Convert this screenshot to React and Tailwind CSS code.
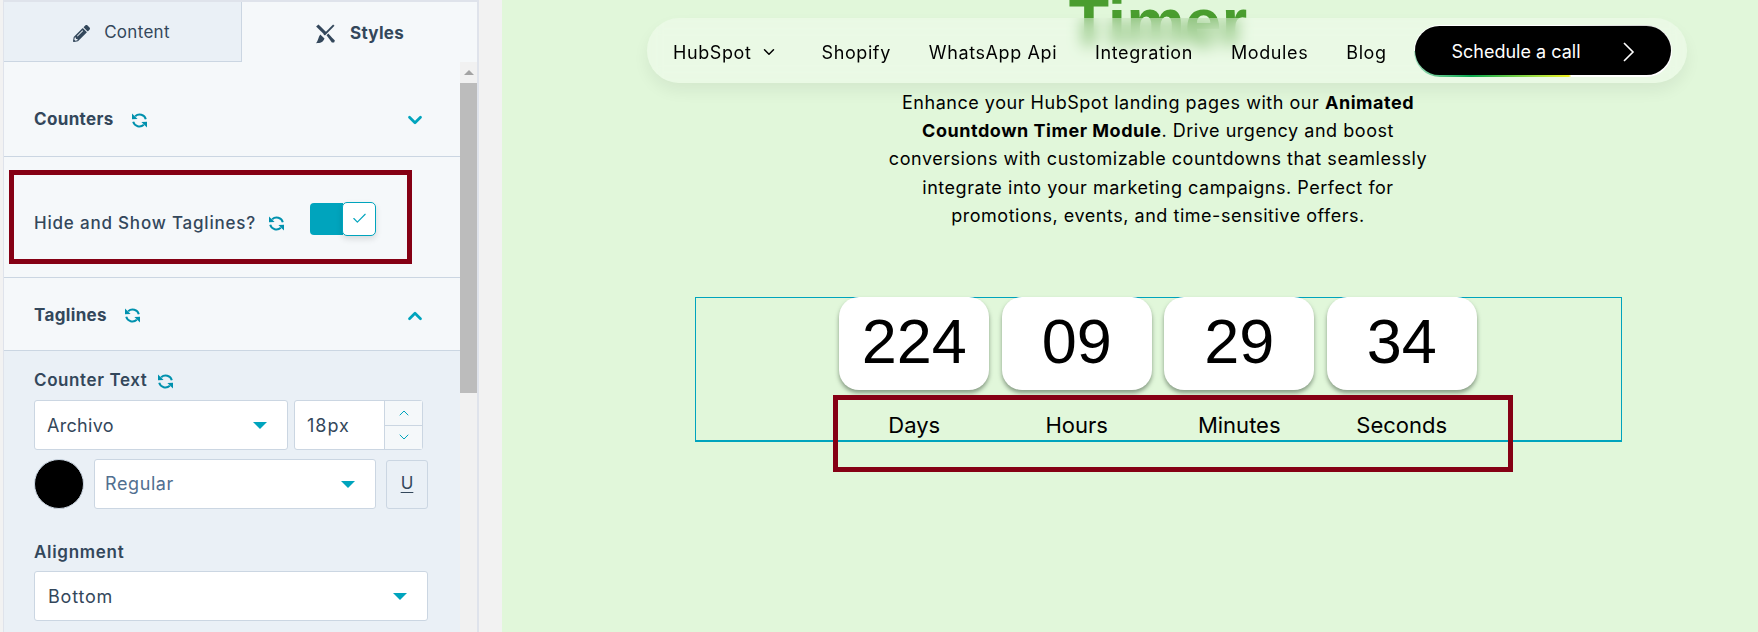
import React from "react";
import { FaPencilAlt } from "react-icons/fa";
import { ChevronDown, ChevronUp, Check } from "lucide-react";

const panelFont = { fontFamily: "Inter, 'Noto Sans', sans-serif" };

function Sync({ className = "" }) {
  return (
    <svg width="17" height="17" viewBox="0 0 17 17" className={"shrink-0 text-[#0091ae] " + className} fill="none">
      <path d="M14.8 7.2 A6.5 6.5 0 0 0 4.2 4.2" stroke="currentColor" strokeWidth="2" />
      <path d="M2.2 9.8 A6.5 6.5 0 0 0 12.8 12.8" stroke="currentColor" strokeWidth="2" />
      <path d="M1 1.6 L6.6 7 L1 7.2 Z" fill="currentColor" />
      <path d="M16 15.4 L10.4 10 L16 9.8 Z" fill="currentColor" />
    </svg>
  );
}

function StylesIcon() {
  return (
    <svg width="21" height="20" viewBox="0 0 20 20" fill="#33475b" className="shrink-0">
      <path d="M0.6 2.4 L3 0.4 L11.4 8.8 L9.2 11 Z" />
      <path d="M11 11.2 L12.8 9.6 L16.4 13.4 L19.4 16.6 L18.6 18.4 L16.4 18.4 L13.8 15 Z" />
      <path d="M17.6 0.6 L19 1.8 L9.4 11.6 L8 10.2 Z" />
      <path d="M4.8 10.6 L9 14.6 C7.6 18.4 5 19.2 0.6 19.2 C2.6 17.4 2.8 13 4.8 10.6 Z" />
    </svg>
  );
}

function Caret() {
  return <span className="w-0 h-0 border-x-[7px] border-x-transparent border-t-[7px] border-t-[#00a4bd]" />;
}

function AccordionRow({ title, open, height, pad }) {
  return (
    <div className={"flex items-center justify-between pl-[30px] pr-[34px] border-b border-[#cbd6e2] shrink-0 " + height + " " + pad}>
      <div className="flex items-center gap-[17px]">
        <span className="text-[17px] font-bold text-[#33475b] tracking-[0.35px]">{title}</span>
        <Sync />
      </div>
      {open ? <ChevronUp size={22} strokeWidth={3} className="text-[#00a4bd]" /> : <ChevronDown size={22} strokeWidth={3} className="text-[#00a4bd]" />}
    </div>
  );
}

function Sidebar() {
  return (
    <aside className="relative w-[502px] h-full shrink-0 bg-[#f2f2f2] pl-[3px] overflow-hidden" style={panelFont}>
      <div className="w-[476px] h-full bg-[#f5f8fa] border-t-2 border-r-[2px] border-l border-[#dfe3eb] flex flex-col">
        <div className="flex h-[60px] shrink-0">
          <div className="w-[238px] bg-[#eaf0f6] border-r border-b border-[#cbd6e2] flex items-center justify-center gap-[14px] text-[#33475b] text-[17px] tracking-[0.3px] pt-[3px] pr-[2px]">
            <FaPencilAlt size={17} />
            <span>Content</span>
          </div>
          <div className="flex-1 flex items-center justify-center gap-[14px] text-[#33475b] text-[17px] font-bold tracking-[0.3px] pt-[3px]">
            <StylesIcon />
            <span>Styles</span>
          </div>
        </div>
        <div className="flex flex-1 min-h-0">
          <div className="flex-1 min-w-0 flex flex-col">
            <AccordionRow title="Counters" height="h-[95px]" pad="pt-[22px]" />
            <div className="h-[121px] flex items-center pl-[30px] pt-[13px] border-b border-[#cbd6e2] shrink-0">
              <span className="w-[226px] text-[17px] font-medium text-[#33475b] whitespace-nowrap tracking-[0.8px]">Hide and Show Taglines?</span>
              <Sync className="ml-[8px]" />
              <div className="ml-[25px] flex items-center h-[33px] w-[66px] -mt-[10px]">
                <div className="w-[34px] h-[32px] bg-[#00a4bd] rounded-l-[4px]" />
                <div className="w-[34px] h-[34px] -ml-[1px] bg-white border border-[#00a4bd] rounded-[5px] flex items-center justify-center shadow-[0_3px_6px_rgba(0,0,0,0.12)]">
                  <Check size={17} strokeWidth={1.6} className="text-[#00a4bd]" />
                </div>
              </div>
            </div>
            <AccordionRow title="Taglines" open height="h-[73px]" pad="pt-[3px]" />
            <div className="flex-1 bg-[#eaf0f6] pl-[30px] pr-[4px] pt-[19px]">
              <div className="flex items-center gap-[10px] h-[22px]">
                <span className="text-[17px] font-semibold text-[#33475b] tracking-[0.6px]">Counter Text</span>
                <Sync />
              </div>
              <div className="flex gap-[6px] mt-[8px] h-[50px]">
                <div className="w-[254px] bg-white border border-[#cbd6e2] rounded-[3px] flex items-center justify-between pl-[12px] pr-[20px] text-[#33475b] text-[18px] tracking-[0.3px]">
                  <span>Archivo</span><Caret />
                </div>
                <div className="w-[129px] bg-white border border-[#cbd6e2] rounded-[3px] flex text-[#33475b] text-[18px] tracking-[1px]">
                  <div className="flex-1 flex items-center pl-[12px]">18px</div>
                  <div className="w-[38px] border-l border-[#cbd6e2] bg-[#f5f8fa] flex flex-col">
                    <div className="flex-1 flex items-center justify-center border-b border-[#cbd6e2]"><ChevronUp size={16} strokeWidth={1.5} className="text-[#00a4bd]" /></div>
                    <div className="flex-1 flex items-center justify-center"><ChevronDown size={16} strokeWidth={1.5} className="text-[#00a4bd]" /></div>
                  </div>
                </div>
              </div>
              <div className="flex items-center mt-[9px] h-[50px]">
                <div className="w-[50px] h-[50px] rounded-full bg-black border border-[#cbd6e2]" />
                <div className="ml-[10px] w-[282px] h-[50px] bg-white border border-[#cbd6e2] rounded-[3px] flex items-center justify-between pl-[10px] pr-[20px] text-[#516f90] text-[18px] tracking-[0.6px]">
                  <span className="-mt-[1px]">Regular</span><Caret />
                </div>
                <div className="ml-[10px] w-[42px] h-[49px] border border-[#cbd6e2] rounded-[3px] flex items-center justify-center text-[#33475b] text-[17px] underline underline-offset-[3px]">U</div>
              </div>
              <div className="mt-[33px] h-[22px] flex items-center text-[17px] font-semibold text-[#33475b] tracking-[0.7px]">Alignment</div>
              <div className="mt-[7px] w-[394px] h-[50px] bg-white border border-[#cbd6e2] rounded-[3px] flex items-center justify-between pl-[13px] pr-[20px] text-[#33475b] text-[18px] tracking-[0.8px]">
                <span>Bottom</span><Caret />
              </div>
            </div>
          </div>
          <div className="w-[17px] shrink-0 bg-[#f1f1f1] flex flex-col">
            <div className="h-[21px] flex items-center justify-center">
              <span className="w-0 h-0 border-x-[5px] border-x-transparent border-b-[5px] border-b-[#a3a3a3]" />
            </div>
            <div className="h-[310px] bg-[#bcbcbc]" />
          </div>
        </div>
      </div>
      <div className="absolute left-[9px] top-[170px] w-[403px] h-[94px] border-[5px] border-[#850014]" />
    </aside>
  );
}

const nav = ["Shopify", "WhatsApp Api", "Integration", "Modules", "Blog"];
const counters = [["224", "Days"], ["09", "Hours"], ["29", "Minutes"], ["34", "Seconds"]];

function Main() {
  return (
    <main className="relative flex-1 h-full bg-[#e1f7da] overflow-hidden text-black" style={{ fontFamily: "Inter, 'Liberation Sans', sans-serif" }}>
      <div className="pl-[56px] flex flex-col items-center">
        <h1 className="text-[66px] leading-[72px] font-bold text-[#4a9d2f] -mt-[14px] h-[103px]" style={{ fontFamily: "'Liberation Sans', sans-serif" }}>Timer</h1>
        <p className="text-[18px] leading-[28.2px] text-center w-[600px] tracking-[0.53px]">
          Enhance your HubSpot landing pages with our <b>Animated<br />Countdown Timer Module</b>. Drive urgency and boost<br />conversions with customizable countdowns that seamlessly<br />integrate into your marketing campaigns. Perfect for<br />promotions, events, and time-sensitive offers.
        </p>
        <div className="mt-[67px] w-[927px] h-[145px] border border-b-2 border-[#00a4bd] flex justify-center gap-[12.5px]">
          {counters.map(([n, l]) => (
            <div key={l} className="w-[150px] flex flex-col items-center -mt-[1px]">
              <div className="w-[150px] h-[93px] bg-white rounded-[20px] shadow-[0_3px_4px_rgba(60,80,60,0.55)] flex items-center justify-center text-[63px] leading-none pb-[4px]" style={{ fontFamily: "'Liberation Sans', sans-serif" }}>{n}</div>
              <div className="mt-[21px] text-[22px] leading-[28px]">{l}</div>
            </div>
          ))}
        </div>
      </div>
      <nav className="absolute left-[145px] top-[18px] w-[1040px] h-[65px] rounded-[33px] bg-white/30 backdrop-blur-[8px] shadow-[0_8px_16px_rgba(0,0,0,0.06)] flex items-center pl-[26px] pr-[15px] text-[18px] tracking-[0.6px]">
        <span className="flex items-center gap-[8px] mr-[44px] pt-[3px]">HubSpot <ChevronDown size={18} strokeWidth={2} /></span>
        <div className="flex items-center gap-[38px] pt-[3px]">
          {nav.map((n) => <span key={n}>{n}</span>)}
        </div>
        <div className="relative ml-auto w-[258px] h-[52px] rounded-[26px] overflow-hidden bg-[linear-gradient(100deg,#ffffff_55%,#d4d4d4_85%,#ffffff)] tracking-normal">
          <div className="absolute left-0 right-0 bottom-0 h-[26px] bg-[linear-gradient(90deg,#9fdcb8,#0aa84f_22%,#a5e040_48%,#f0f020_60%,#ffffff_61%)]" />
          <div className="absolute left-[1px] right-[1px] top-[1px] bottom-[2px] bg-black text-white rounded-[25px] flex items-center justify-center gap-[41px] text-[18px] pt-[3px]">
            <span>Schedule a call</span>
            <svg width="13" height="22" viewBox="0 0 13 22" fill="none" stroke="currentColor" strokeWidth="1.6"><path d="M2 2 L11 11 L2 20" /></svg>
          </div>
        </div>
      </nav>
      <div className="absolute left-[331px] top-[395px] w-[680px] h-[77px] border-[5px] border-[#850014]" />
    </main>
  );
}

export default function App() {
  return (
    <div className="flex w-[1758px] h-[632px] overflow-hidden">
      <Sidebar />
      <Main />
    </div>
  );
}
